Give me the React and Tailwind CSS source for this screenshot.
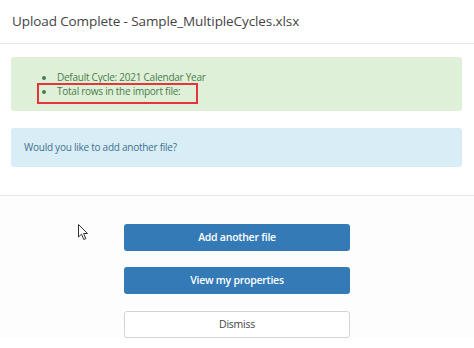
export default function App() {
  return (
    <div className="relative w-[474px] h-[348px] bg-white overflow-hidden text-[10px] tracking-[-0.25px]" style={{ fontFamily: '"Open Sans", "Noto Sans", sans-serif' }}>
      <div className="h-[44px] border-b border-[#e8e8e8] flex items-center pl-[12px]">
        <span className="text-[13.5px] tracking-[-0.1px] text-[#444]">Upload Complete - Sample_MultipleCycles.xlsx</span>
      </div>
      <div className="pt-[13px] pl-[11px] pr-[12px] pb-[28px] border-b border-[#e8e8e8]">
        <div className="relative h-[54px] bg-[#dff0d8] rounded-[3px] text-[#4a7c4b] pt-[13px] pl-[33px]">
          <ul className="list-disc pl-[12px] leading-[14px]">
            <li className="pl-[1px]">Default Cycle: 2021 Calendar Year</li>
            <li className="pl-[1px]">Total rows in the import file:</li>
          </ul>
          <div className="absolute left-[26px] top-[26px] w-[161px] h-[21px] border-2 border-[#e5343a]"></div>
        </div>
        <div className="mt-[17px] h-[39px] bg-[#d9edf7] rounded-[3px] text-[#3f7290] flex items-center pl-[13px]">
          Would you like to add another file?
        </div>
      </div>
      <div className="relative bg-[#fdfdfd] pt-[28px] flex flex-col items-center gap-[16px] text-[10.5px]">
        <button className="w-[226px] h-[27px] bg-[#337ab7] rounded-[3px] text-white font-semibold">Add another file</button>
        <button className="w-[226px] h-[27px] bg-[#337ab7] rounded-[3px] text-white font-semibold">View my properties</button>
        <button className="w-[226px] h-[27px] bg-white border border-[#d4d4d4] rounded-[3px] text-[#444] mt-[1px]">Dismiss</button>
        <svg className="absolute left-[78px] top-[28px]" width="11" height="17" viewBox="0 0 11 17">
          <path d="M0.5 0.5 L0.5 13 L3.5 10.2 L5.8 15.5 L7.8 14.6 L5.6 9.5 L9.5 9.5 Z" fill="white" stroke="#333" strokeWidth="1" strokeLinejoin="miter" />
        </svg>
      </div>
    </div>
  );
}
